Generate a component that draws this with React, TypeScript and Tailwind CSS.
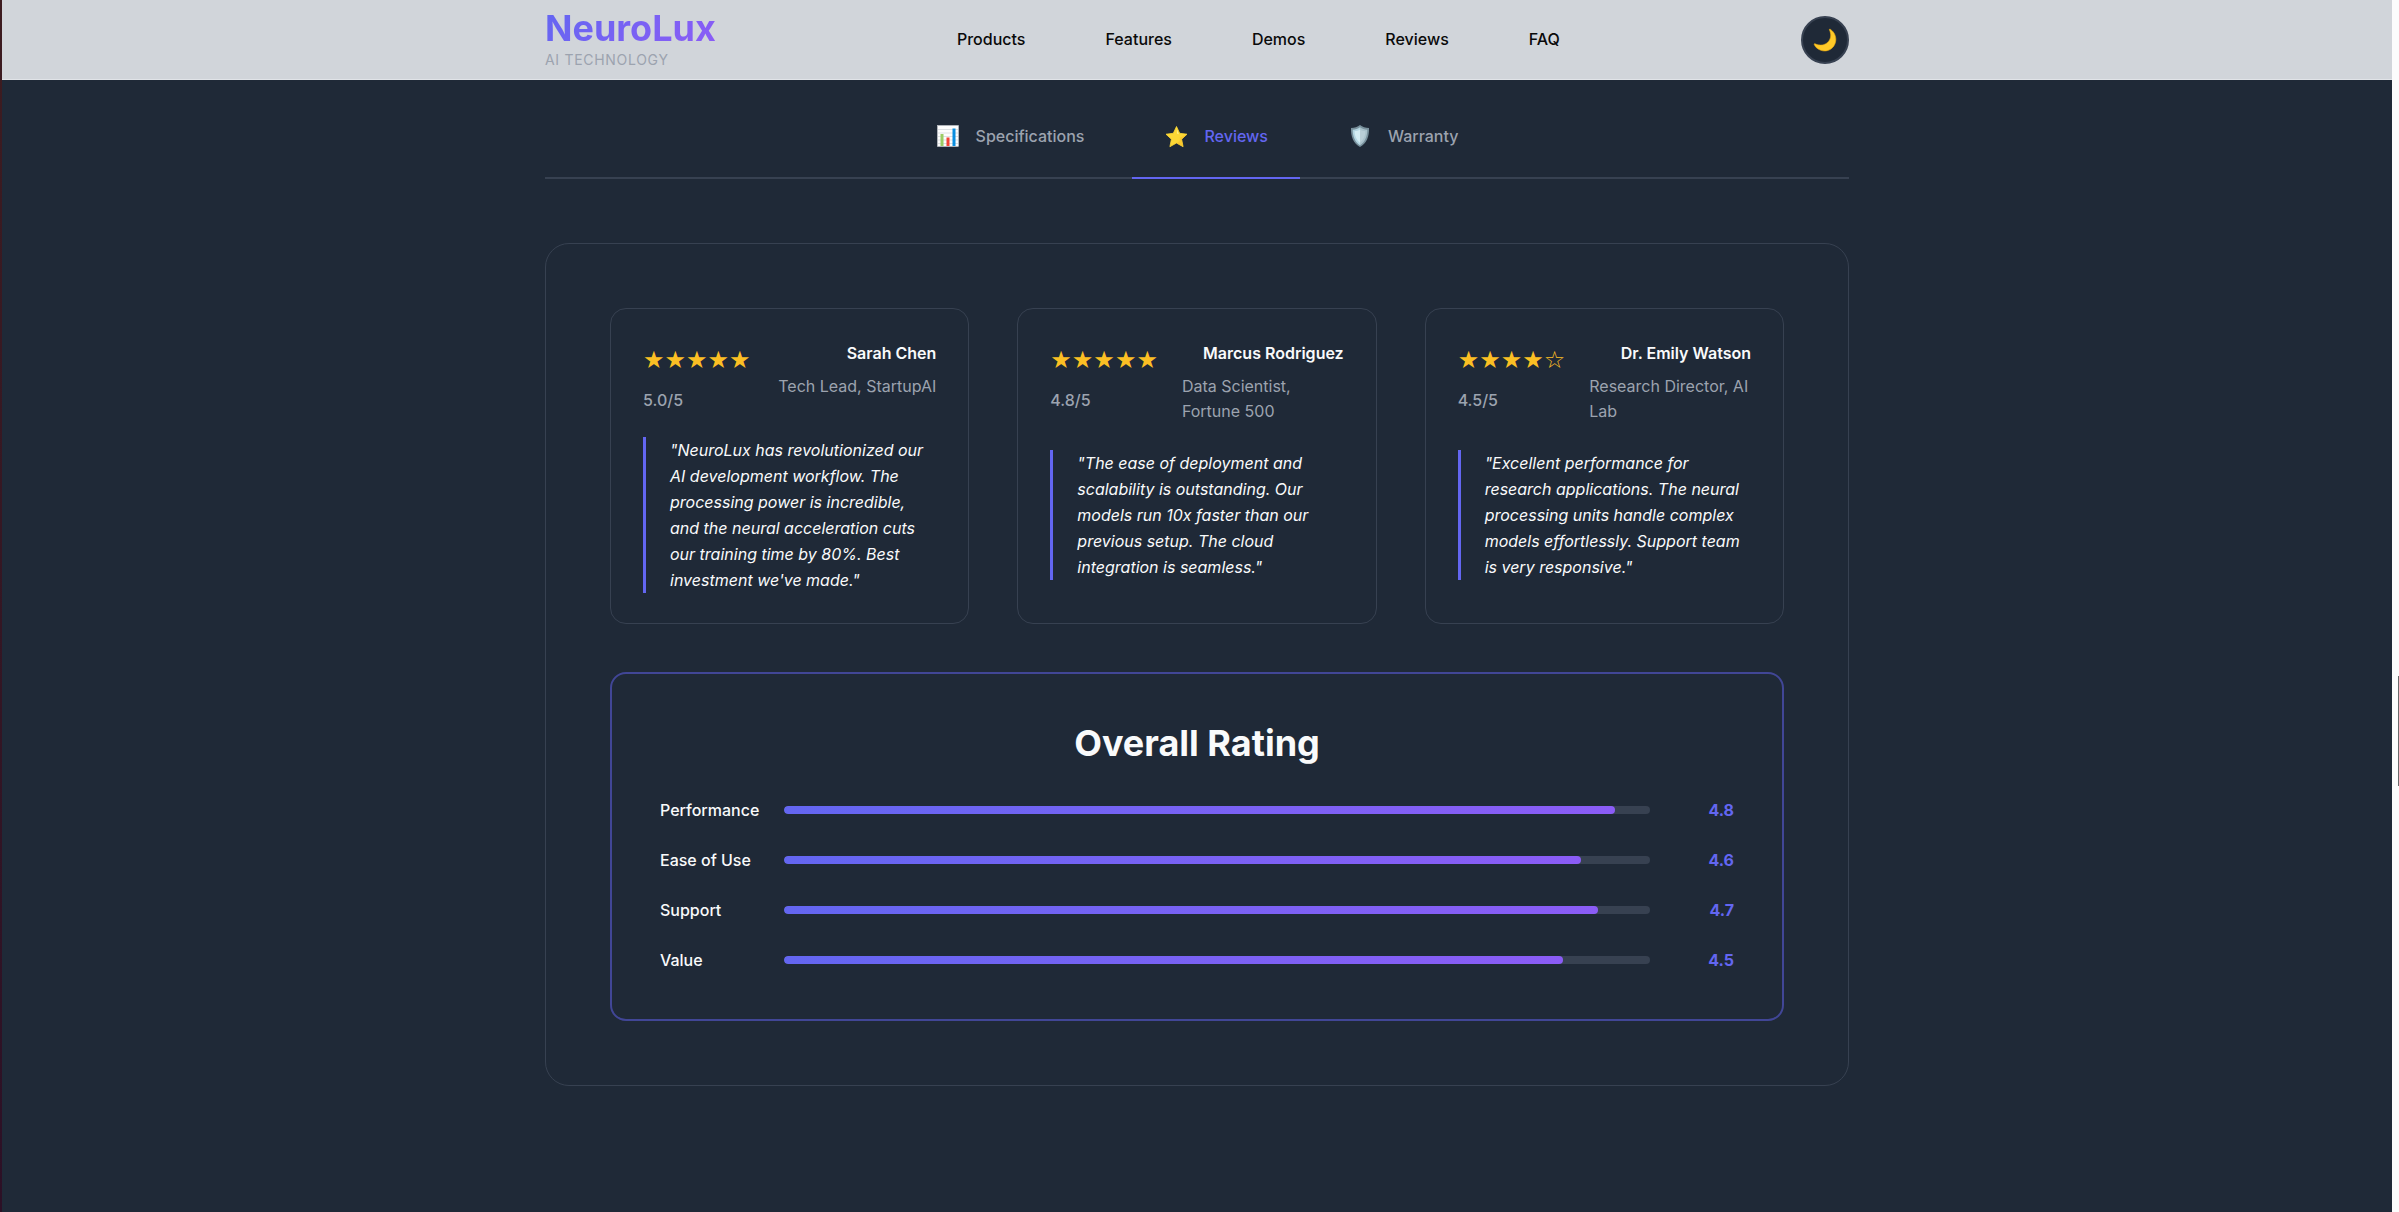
import { useState } from 'react'

const navLinks = ['Products', 'Features', 'Demos', 'Reviews', 'FAQ']

const reviews = [
  {
    stars: '★★★★★',
    score: '5.0/5',
    name: 'Sarah Chen',
    role: 'Tech Lead, StartupAI',
    text: '"NeuroLux has revolutionized our AI development workflow. The processing power is incredible, and the neural acceleration cuts our training time by 80%. Best investment we\'ve made."',
  },
  {
    stars: '★★★★★',
    score: '4.8/5',
    name: 'Marcus Rodriguez',
    role: 'Data Scientist, Fortune 500',
    text: '"The ease of deployment and scalability is outstanding. Our models run 10x faster than our previous setup. The cloud integration is seamless."',
  },
  {
    stars: '★★★★☆',
    score: '4.5/5',
    name: 'Dr. Emily Watson',
    role: 'Research Director, AI Lab',
    text: '"Excellent performance for research applications. The neural processing units handle complex models effortlessly. Support team is very responsive."',
  },
]

const ratings = [
  { label: 'Performance', value: 4.8 },
  { label: 'Ease of Use', value: 4.6 },
  { label: 'Support', value: 4.7 },
  { label: 'Value', value: 4.5 },
]

function MoonIcon() {
  return (
    <svg viewBox="0 0 24 24" className="h-6 w-6" aria-hidden="true">
      <path
        d="M17.2 1.2C21.6 4 24 9.600 22.300 14.900C20.300 21.400 13.600 24.400 7.800 22.300C4.500 21.100 2.100 18.800 1.200 16.400C1 15.800 1.500 15.500 2.100 15.800C6.400 18 12 17.500 15.300 13.700C18.200 10.400 18.300 6 16.500 1.900C16.200 1.300 16.700 .9 17.200 1.200Z"
        fill="#ffc928"
        stroke="#e9a910"
        strokeWidth="0.6"
      />
    </svg>
  )
}

function ChartIcon() {
  return (
    <svg viewBox="0 0 24 24" className="h-6 w-6" aria-hidden="true">
      <rect x="1.500" y="1.500" width="21" height="21" fill="#fdfdfd" />
      <path d="M2 5.500H22M2 9H22M2 12.500H22M2 16H22M2 19.500H22" stroke="#dde0e3" strokeWidth="1" />
      <rect x="4.500" y="10" width="3" height="12" fill="#9ccc65" />
      <rect x="10.500" y="13.500" width="3" height="8.500" fill="#f44336" />
      <rect x="16.500" y="4.500" width="3" height="17.500" fill="#0a8ee0" />
      <rect x="1.500" y="1.500" width="21" height="21" fill="none" stroke="#cfd4d8" strokeWidth="0.5" />
    </svg>
  )
}

function StarIcon() {
  return (
    <svg viewBox="0 0 24 24" className="h-6 w-6" aria-hidden="true">
      <path
        d="M12.500 2.500L15.700 9.300L23 10.200L17.600 15.200L19.100 22.700L12.500 19L5.900 22.700L7.400 15.200L2 10.200L9.300 9.300Z"
        fill="#fdd835"
        stroke="#fdd835"
        strokeWidth="0.8"
        strokeLinejoin="round"
      />
      <path d="M12.800 5L14.800 10.200L13.300 9.700Z" fill="#fff59d" />
      <path d="M23 10.200L17.600 15.200L19.100 22.700L12.500 19C15.500 18.500 16.500 16 15.700 13.700Z" fill="#f9b825" opacity="0.5" />
    </svg>
  )
}

function ShieldIcon() {
  return (
    <svg viewBox="0 0 24 24" className="h-6 w-6" aria-hidden="true">
      <path
        d="M12 1C14.500 3 17.500 3.900 21 4C21.400 12.500 18.500 19.500 12 23C5.500 19.500 2.600 12.500 3 4C6.500 3.900 9.500 3 12 1Z"
        fill="#78909c"
      />
      <path d="M12 3.200C14 4.600 16.500 5.500 19.300 5.700C19.300 12.300 17 18 12 21.200Z" fill="#a9c1cb" />
      <path d="M12 3.200C10 4.600 7.500 5.500 4.700 5.700C4.700 12.300 7 18 12 21.200Z" fill="#b4d6e2" />
      <path d="M12 5.400C10.500 6.400 8.700 7 6.500 7.300C6.700 12 8.400 16.200 12 18.900Z" fill="#d5edf4" />
      <path d="M12 5.400C13.500 6.400 15.300 7 17.500 7.300C17.300 12 15.600 16.200 12 18.900Z" fill="#b9ced7" />
    </svg>
  )
}

const tabs = [
  { id: 'specs', label: 'Specifications', Icon: ChartIcon },
  { id: 'reviews', label: 'Reviews', Icon: StarIcon },
  { id: 'warranty', label: 'Warranty', Icon: ShieldIcon },
]

function Header() {
  return (
    <header className="h-20 border-b border-[#e1e4e8] bg-[#d1d5da]">
      <div className="mx-auto flex h-full max-w-[1400px] items-center justify-between px-12">
        <div className="flex flex-col">
          <span className="bg-linear-135 from-[#6366f1] to-[#8b5cf6] bg-clip-text text-4xl leading-10 font-bold text-transparent">
            NeuroLux
          </span>
          <span className="text-sm leading-6 tracking-wider text-[#9ca3af]">AI TECHNOLOGY</span>
        </div>
        <nav className="flex gap-20 pb-0.5">
          {navLinks.map((link) => (
            <a key={link} href={`#${link.toLowerCase()}`} className="leading-[26px] font-medium text-[#0a0a0a]">
              {link}
            </a>
          ))}
        </nav>
        <button
          type="button"
          aria-label="Toggle theme"
          className="flex h-12 w-12 items-center justify-center rounded-full border-2 border-[#374151] bg-[#1f2937]"
        >
          <MoonIcon />
        </button>
      </div>
    </header>
  )
}

function ReviewCard({ review }: { review: (typeof reviews)[number] }) {
  return (
    <article className="rounded-2xl border border-[#374151] px-8 pt-8 pb-[30px]">
      <div className="mb-6 flex items-start justify-between gap-6">
        <div className="flex flex-col gap-2">
          <span className="font-['DejaVu_Sans',sans-serif] text-2xl leading-[38px] text-[#fbbf24]">
            {review.stars}
          </span>
          <span className="leading-[26px] font-medium text-[#9ca3af]">{review.score}</span>
        </div>
        <div className="flex flex-col items-end gap-2 pb-0.5">
          <h4 className="leading-[25px] font-semibold">{review.name}</h4>
          <span className="leading-[25px] text-[#9ca3af]">{review.role}</span>
        </div>
      </div>
      <blockquote className="border-l-[3px] border-[#6366f1] pl-6 leading-[26px] italic">{review.text}</blockquote>
    </article>
  )
}

function OverallRating() {
  return (
    <section className="mt-12 rounded-2xl border-2 border-[#414696] px-12 pt-12 pb-[46px]">
      <h3 className="mb-8 text-center text-4xl leading-[43px] font-bold">Overall Rating</h3>
      <div className="flex flex-col gap-6">
        {ratings.map((r) => (
          <div key={r.label} className="flex items-center gap-6 leading-[26px]">
            <span className="w-[100px] font-medium">{r.label}</span>
            <div className="h-2 flex-1 overflow-hidden rounded-full bg-[#374151]">
              <div
                className="h-full rounded-full bg-linear-135 from-[#6366f1] to-[#8b5cf6]"
                style={{ width: `${r.value * 20}%` }}
              />
            </div>
            <span className="w-[60px] text-right font-bold text-[#6366f1]">{r.value.toFixed(1)}</span>
          </div>
        ))}
      </div>
    </section>
  )
}

export default function App() {
  const [active, setActive] = useState('reviews')

  return (
    <div className="flex min-h-screen bg-[#1f2937] font-['Inter',sans-serif] text-base text-[#f9fafb]">
      <div className="w-0.5 bg-linear-to-b from-[#3d1c20] to-[#2c1026]" />
      <div className="min-w-0 flex-1">
        <Header />
        <main className="mx-auto max-w-[1400px] px-12 pt-5 pb-32">
          <div role="tablist" className="flex justify-center gap-4 border-b-2 border-[#374151]">
            {tabs.map(({ id, label, Icon }) => (
              <button
                key={id}
                type="button"
                role="tab"
                aria-selected={active === id}
                onClick={() => setActive(id)}
                className={`-mb-0.5 flex items-center gap-4 border-b-2 px-8 pt-6 pb-[29px] ${
                  active === id ? 'border-[#6366f1] text-[#6366f1]' : 'border-transparent text-[#9ca3af]'
                } font-medium`}
              >
                <Icon />
                {label}
              </button>
            ))}
          </div>
          <section className="mt-16 rounded-3xl border border-[#374151] p-16">
            <div className="grid grid-cols-3 gap-12">
              {reviews.map((review) => (
                <ReviewCard key={review.name} review={review} />
              ))}
            </div>
            <OverallRating />
          </section>
        </main>
      </div>
      {/* scrollbar gutter */}
      <div className="flex w-[7px] items-center justify-end bg-[#fcfcfc]">
        <div className="mt-[248px] h-[110px] w-px bg-[#6b6b6b]" />
      </div>
    </div>
  )
}
